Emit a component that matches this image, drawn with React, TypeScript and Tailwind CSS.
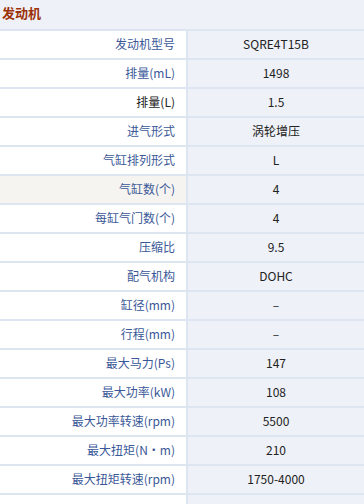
import React from "react";

interface SpecRow {
  label: string;
  value: string;
  link?: boolean;
  hover?: boolean;
}

const rows: SpecRow[] = [
  { label: "发动机型号", value: "SQRE4T15B", link: true },
  { label: "排量(mL)", value: "1498", link: true },
  { label: "排量(L)", value: "1.5" },
  { label: "进气形式", value: "涡轮增压", link: true },
  { label: "气缸排列形式", value: "L", link: true },
  { label: "气缸数(个)", value: "4", link: true, hover: true },
  { label: "每缸气门数(个)", value: "4", link: true },
  { label: "压缩比", value: "9.5", link: true },
  { label: "配气机构", value: "DOHC", link: true },
  { label: "缸径(mm)", value: "–", link: true },
  { label: "行程(mm)", value: "–", link: true },
  { label: "最大马力(Ps)", value: "147", link: true },
  { label: "最大功率(kW)", value: "108", link: true },
  { label: "最大功率转速(rpm)", value: "5500", link: true },
  { label: "最大扭矩(N·m)", value: "210", link: true },
  { label: "最大扭矩转速(rpm)", value: "1750-4000", link: true },
  { label: "", value: "" },
];

export default function App() {
  return (
    <div
      className="w-[364px] h-[504px] overflow-hidden bg-[#eef1f7] text-[12px]"
      style={{ fontFamily: '"Noto Sans CJK SC", "Noto Sans", sans-serif' }}
    >
      <div className="h-[29px] flex items-center pl-[2px] pb-[4px]">
        <span className="text-[13px] font-bold text-[#9c3208]">发动机</span>
      </div>
      {rows.map((row, i) => (
        <div key={i} className="flex h-[29px] border-t-2 border-[#dce5f0]">
          <div
            className={`w-[188px] shrink-0 flex items-center justify-end pr-[11px] pb-[1px] border-r-2 border-[#dce5f0] ${
              row.hover ? "bg-[#f6f4f0]" : "bg-white"
            } ${row.link ? "text-[#3a5898]" : "text-[#222]"}`}
          >
            {row.label}
          </div>
          <div className="flex-1 flex items-center justify-center pb-[1px] text-[#222] bg-[#eef1f7]">
            {row.value}
          </div>
        </div>
      ))}
    </div>
  );
}
